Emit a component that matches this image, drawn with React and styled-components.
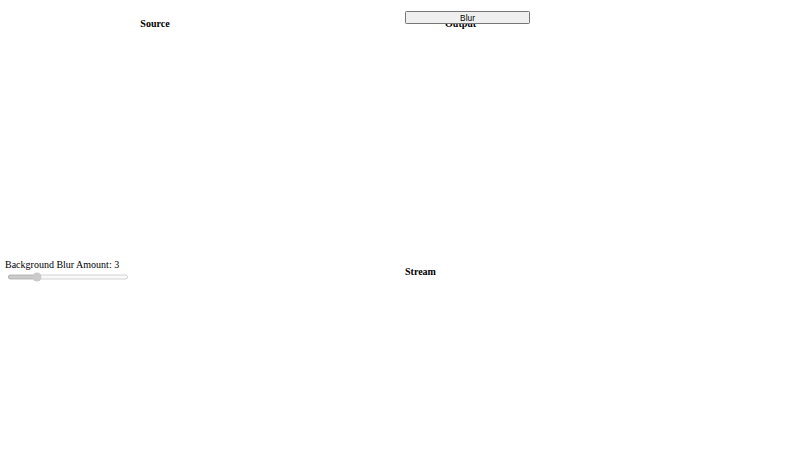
import React, { useState } from "react";
import styled, { createGlobalStyle } from "styled-components";

const Global = createGlobalStyle`
  html, body { margin: 0; padding: 0; background: #fff; }
  body { font-family: "Liberation Serif", "Times New Roman", serif; color: #000; }
`;

const Page = styled.div`
  zoom: 0.625;
  width: 1280px;
  height: 720px;
  padding: 8px;
  box-sizing: border-box;
  display: grid;
  grid-template-columns: 640px 640px;
  grid-template-rows: 396px auto;
  align-content: start;
`;

const Cell = styled.div`
  position: relative;
  display: flex;
  flex-direction: column;
  align-items: flex-start;
`;

const Heading = styled.h4`
  margin: 21.28px 0;
  font-size: 16px;
  font-weight: bold;
  text-align: ${(p) => p.$align || "center"};
  width: ${(p) => (p.$width ? `${p.$width}px` : "auto")};
`;

const Controls = styled.div`
  padding-top: 11px;
  display: flex;
  flex-direction: column;
  align-items: flex-start;
  font-size: 16px;
`;

const Range = styled.input`
  width: 195px;
  margin: 2px 2px 2px 3px;
`;

const BlurButton = styled.button`
  position: absolute;
  top: 9px;
  left: 0;
  width: 200px;
  height: 22px;
  font-family: "Liberation Sans", Arial, sans-serif;
  font-size: 13.333px;
  background: #efefef;
  border: 1px solid #767676;
  border-radius: 2px;
  padding: 1px 6px;
  color: #000;
`;

export default function App() {
  const [amount, setAmount] = useState(3);
  return (
    <>
      <Global />
      <Page>
        <Cell>
          <Heading $width={480}>Source</Heading>
        </Cell>
        <Cell>
          <Heading $width={178}>Output</Heading>
          <BlurButton>Blur</BlurButton>
        </Cell>
        <Controls>
          <span>Background Blur Amount: {amount}</span>
          <Range
            type="range"
            min="1"
            max="10"
            value={amount}
            disabled
            onChange={(e) => setAmount(Number(e.target.value))}
          />
        </Controls>
        <Cell>
          <Heading $align="left">Stream</Heading>
        </Cell>
      </Page>
    </>
  );
}
